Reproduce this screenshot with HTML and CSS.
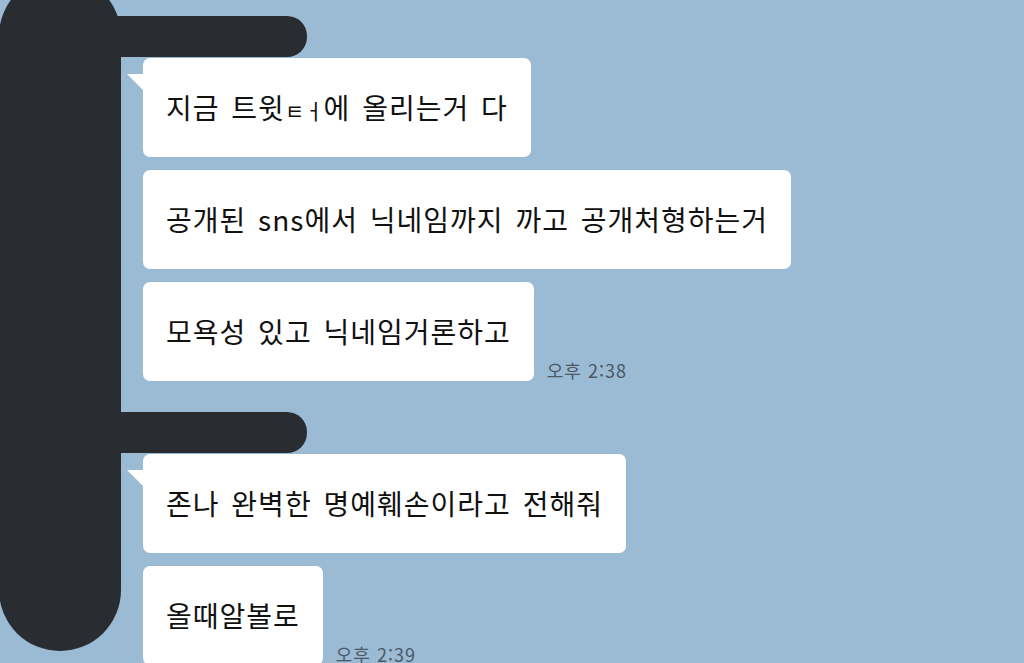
FILE: index.html
```html
<!DOCTYPE html>
<html lang="ko">
<head>
  <meta charset="UTF-8">
  <meta name="viewport" content="width=device-width, initial-scale=1.0">
  <title>채팅</title>
  <link rel="stylesheet" href="styles.css">
</head>
<body>
  <div class="chat">
    <div class="group">
      <div class="row">
        <div class="bubble first">지금 트윗<span class="jamo">ㅌㅓ</span>에 올리는거 다</div>
      </div>
      <div class="row">
        <div class="bubble">공개된 sns에서 닉네임까지 까고 공개처형하는거</div>
      </div>
      <div class="row">
        <div class="bubble">모욕성 있고 닉네임거론하고</div>
        <span class="time">오후 2:38</span>
      </div>
    </div>

    <div class="group">
      <div class="row">
        <div class="bubble first">존나 완벽한 명예훼손이라고 전해줘</div>
      </div>
      <div class="row">
        <div class="bubble">올때알볼로</div>
        <span class="time">오후 2:39</span>
      </div>
    </div>
  </div>

  <!-- 프로필/이름 가림 -->
  <div class="redact">
    <div class="redact-col"></div>
    <div class="redact-bar bar-top"></div>
    <div class="redact-bar bar-mid"></div>
  </div>
</body>
</html>
```

FILE: styles.css
```css
body {
  font-family: "Noto Sans CJK KR", "Noto Sans", sans-serif;
  margin: 0;
  height: 663px;
  overflow: hidden;
  background-color: #9bbad4;
  color: #111;
}

.chat {
  display: flex;
  flex-direction: column;
  gap: 73px;
  padding: 58px 0 0 143px;
}

.group {
  display: flex;
  flex-direction: column;
  gap: 13px;
}

.row {
  display: flex;
  align-items: flex-end;
  gap: 13px;
}

.bubble {
  position: relative;
  padding: 31px 23px;
  background-color: white;
  border-radius: 7px;
  font-size: 28px;
  line-height: 37px;
  letter-spacing: 1px;
  word-spacing: 3px;
  white-space: nowrap;
}

.bubble .jamo {
  font-size: 21px;
  line-height: 0;
  letter-spacing: 0;
}

.bubble.first::before {
  content: "";
  position: absolute;
  left: -16px;
  top: 16px;
  border-top: 16px solid white;
  border-left: 16px solid transparent;
}

.time {
  font-size: 18px;
  line-height: 20px;
  letter-spacing: 1px;
  color: #4a5866;
  margin-bottom: 1px;
  white-space: nowrap;
}

.redact {
  position: absolute;
  top: 0;
  left: 0;
}

.redact-col {
  position: absolute;
  left: -1px;
  top: -25px;
  width: 122px;
  height: 676px;
  border-radius: 61px;
  background-color: #292d32;
}

.redact-bar {
  position: absolute;
  left: 100px;
  width: 207px;
  height: 41px;
  border-radius: 0 20px 20px 0;
  background-color: #292d32;
}

.bar-top {
  top: 16px;
}

.bar-mid {
  top: 412px;
}
```
